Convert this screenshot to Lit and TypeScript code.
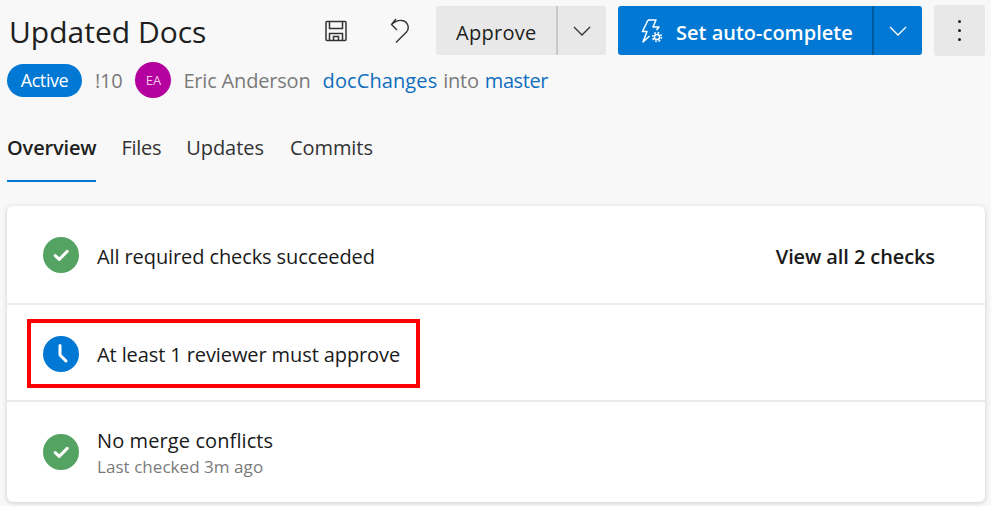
import { LitElement, html, css } from "lit";
import { customElement } from "lit/decorators.js";

const chevron = html`<svg class="chev" viewBox="0 0 18 10" width="18" height="10"><path d="M1 1l8 8 8-8" fill="none" stroke="currentColor" stroke-width="1.3"/></svg>`;
const check = html`<svg class="status" viewBox="0 0 36 36" width="36" height="36"><circle cx="18" cy="18" r="18" fill="#55a362"/><path d="M12.2 18.6l4 3.8 8-8" fill="none" stroke="#fff" stroke-width="3" stroke-linecap="round" stroke-linejoin="round"/></svg>`;
const clock = html`<svg class="status" viewBox="0 0 36 36" width="36" height="36"><circle cx="18" cy="18" r="18" fill="#0078d4"/><path d="M17 9.5v9.5l6 6" fill="none" stroke="#fff" stroke-width="3" stroke-linecap="round" stroke-linejoin="round"/></svg>`;

@customElement("app-root")
export class AppRoot extends LitElement {
  static styles = css`
    :host { display: block; width: 991px; height: 506px; overflow: hidden; background: #f8f8f8; font-family: "Open Sans", "Noto Sans", sans-serif; color: #201f1e; }
    * { box-sizing: border-box; }
    .top { display: flex; align-items: center; height: 49px; margin-top: 6px; padding-left: 9px; }
    .title { font-size: 30px; width: 315px; padding-top: 2px; line-height: 47px; white-space: nowrap; }
    .icon-btn { display: flex; justify-content: center; color: #333; }
    .save { width: 24px; margin-right: 40px; }
    .undo { width: 24px; margin-right: 24px; }
    .btn-group { display: flex; height: 49px; border-radius: 3px; overflow: hidden; }
    .approve { background: #e8e8e8; width: 170px; margin-right: 12px; font-size: 20px; letter-spacing: 0.3px; }
    .approve .main { width: 122px; padding: 3px 0 0 20px; border-right: 2px solid #c8c8c8; display: flex; align-items: center; }
    .approve .drop { flex: 1; display: flex; align-items: center; justify-content: center; color: #333; }
    .auto { background: #0078d4; color: #fff; width: 304px; margin-right: 12px; font-size: 20px; font-weight: 600; }
    .auto .main { width: 256px; border-right: 2px solid #005a9e; display: flex; align-items: center; padding-left: 22px; gap: 11px; white-space: nowrap; }
    .auto .label { padding-top: 3px; }
    .auto .drop { flex: 1; display: flex; align-items: center; justify-content: center; }
    .more { width: 51px; height: 51px; border-radius: 3px; background: #e8e8e8; display: flex; flex-direction: column; align-items: center; justify-content: center; gap: 6px; }
    .dot { width: 3px; height: 3px; border-radius: 50%; background: #201f1e; }
    .meta { display: flex; align-items: center; height: 36px; margin-top: 7px; padding-left: 7px; font-size: 20px; letter-spacing: -0.25px; color: #7a7a7a; white-space: nowrap; }
    .badge { width: 75px; height: 33px; border-radius: 17px; background: #0078d4; color: #fff; font-size: 18px; font-weight: 500; display: flex; align-items: center; justify-content: center; margin-right: 13px; letter-spacing: -0.4px; }
    .avatar { width: 36px; height: 36px; border-radius: 50%; background: #b4009e; color: #f3c6ec; font-size: 13px; display: flex; align-items: center; justify-content: center; margin: 0 12px 0 13px; letter-spacing: 0; }
    .link { color: #106ebe; }
    .doc { letter-spacing: 0.1px; }
    .master { letter-spacing: -0.4px; }
    .author { margin-right: 12px; letter-spacing: -0.18px; }
    .into { margin: 0 6px; }
    .tabs { display: flex; gap: 25px; margin-top: 32px; padding-left: 7px; font-size: 20px; letter-spacing: -0.3px; height: 52px; }
    .tab { padding-top: 3px; line-height: 30px; color: #333; }
    .tab.wide { letter-spacing: -0.05px; }
    .tab.commits { margin-left: 1px; }
    .tab.sel { color: #201f1e; font-weight: 600; border-bottom: 2px solid #0078d4; letter-spacing: -0.15px; }
    .card { margin: 24px 6px 0 7px; background: #fff; border-radius: 6px; box-shadow: 0 1px 5px rgba(0,0,0,.18); height: 296px; display: flex; flex-direction: column; font-size: 20px; letter-spacing: -0.1px; color: #1a1a1a; }
    .row { display: flex; align-items: center; padding-left: 36px; gap: 18px; }
    .r1 { height: 99px; padding-right: 50px; justify-content: space-between; border-bottom: 2px solid #ebebeb; }
    .r2 { height: 97px; border-bottom: 2px solid #ebebeb; padding: 14px 0 0 20px; align-items: flex-start; }
    .r3 { flex: 1; }
    .left { display: flex; align-items: center; gap: 18px; }
    .txt { padding-top: 3px; }
    .mark .txt { padding-top: 1px; }
    .all { font-weight: 600; padding-top: 3px; }
    .mark { display: flex; align-items: center; gap: 18px; border: 4px solid #f00; height: 69px; width: 393px; padding-left: 12px; }
    .sub { font-size: 17px; color: #7a7a7a; letter-spacing: 0.05px; line-height: 22px; padding-top: 1px; }
    .main-t { line-height: 28px; letter-spacing: 0.1px; }
  `;
  render() {
    return html`
      <div class="top">
        <div class="title">Updated Docs</div>
        <div class="icon-btn save"><svg viewBox="0 0 22 22" width="22" height="22" fill="none" stroke="#333" stroke-width="1.5"><path d="M1 2.500a1 1 0 0 1 1-1h18a1 1 0 0 1 1 1v17a1 1 0 0 1-1 1h-18a1 1 0 0 1-1-1z"/><path d="M4.500 1.500v7h13v-7M4.500 20.500v-7h13v7M8.500 20.500v-4h5v4"/></svg></div>
        <div class="icon-btn undo"><svg viewBox="0 0 20 26" width="20" height="26" fill="none" stroke="#333" stroke-width="1.4"><path d="M1.500 6.500C5 3.500 9 2 12 2.500a7 7 0 0 1 4.500 11.500L6 24.500M6 1L1.500 6.500 7 12"/></svg></div>
        <div class="btn-group approve"><div class="main">Approve</div><div class="drop">${chevron}</div></div>
        <div class="btn-group auto">
          <div class="main"><svg viewBox="0 0 25 25" width="25" height="25" fill="none" stroke="#fff" stroke-width="1.5" stroke-linejoin="round"><path d="M8 2h8l-3 7h6l-2.500 3M8 2L2.500 13.500H7L3 24l6.500-6"/><circle cx="17" cy="19" r="2.600" stroke-width="1.500"/><circle cx="17" cy="19" r="4.400" stroke-dasharray="1.700 1.760" stroke-width="1.700"/></svg><span class="label">Set auto-complete</span></div>
          <div class="drop">${chevron}</div>
        </div>
        <div class="more"><span class="dot"></span><span class="dot"></span><span class="dot"></span></div>
      </div>
      <div class="meta">
        <span class="badge">Active</span><span>!10</span><span class="avatar">EA</span><span class="author">Eric Anderson</span>
        <span class="link doc">docChanges</span><span class="into">into</span><span class="link master">master</span>
      </div>
      <div class="tabs">
        <div class="tab sel">Overview</div><div class="tab">Files</div><div class="tab wide">Updates</div><div class="tab wide commits">Commits</div>
      </div>
      <div class="card">
        <div class="row r1"><div class="left">${check}<span class="txt">All required checks succeeded</span></div><span class="all">View all 2 checks</span></div>
        <div class="row r2"><div class="mark">${clock}<span class="txt">At least 1 reviewer must approve</span></div></div>
        <div class="row r3">${check}<div><div class="main-t">No merge conflicts</div><div class="sub">Last checked 3m ago</div></div></div>
      </div>
    `;
  }
}
